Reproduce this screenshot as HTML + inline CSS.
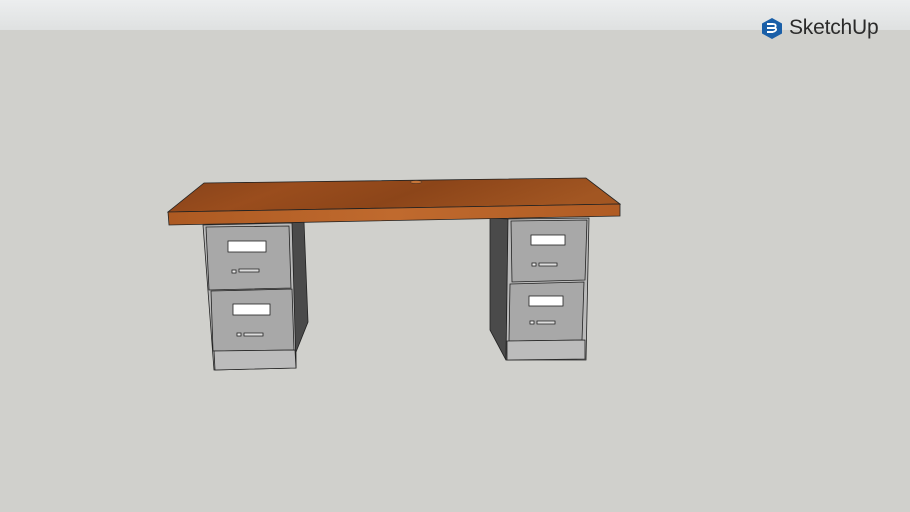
<!DOCTYPE html>
<html><head><style>
html,body{margin:0;padding:0;width:910px;height:512px;overflow:hidden;background:#d0d0cc;font-family:"Liberation Sans",sans-serif}
.top{position:absolute;left:0;top:0;width:910px;height:30px;background:linear-gradient(#eceeef,#dfe1e1)}
.logo{position:absolute;left:761px;top:16px;display:flex;align-items:center}
.logo span{font-size:21px;color:#2b2b2b;margin-left:6px;letter-spacing:-0.2px}
</style></head><body>
<div class="top"></div>
<div class="logo">
<svg width="22" height="23" viewBox="0 0 22 23"><path d="M11 1 L21 6.5 V16.5 L11 22 L1 16.5 V6.5Z" fill="#1a5fa8"/><path d="M6 7 H12 M6 11 H14 M6 15 H12" stroke="#fff" stroke-width="2" fill="none"/><path d="M12 7 Q16 7 14 11 M14 11 Q17 13 12 15" stroke="#fff" stroke-width="1.8" fill="none"/></svg>
<span>SketchUp</span>
</div>
<svg width="910" height="512" style="position:absolute;left:0;top:0">
<defs>
<linearGradient id="wood" x1="0" y1="0" x2="1" y2="0.2">
<stop offset="0" stop-color="#86421a"/><stop offset="0.3" stop-color="#9a4d1d"/><stop offset="0.6" stop-color="#8c4519"/><stop offset="1" stop-color="#a25622"/>
</linearGradient>
<linearGradient id="edge" x1="0" y1="0" x2="1" y2="0">
<stop offset="0" stop-color="#ad5a22"/><stop offset="0.5" stop-color="#c06a2e"/><stop offset="1" stop-color="#b05c24"/>
</linearGradient>
</defs>
<g stroke="#222" stroke-width="0.8">
<polygon points="288,223 304,222 308,322 296,352 296,368 292,368" fill="#4a4a4a"/>
<polygon points="203,225 292,223 296,368 214,370" fill="#b9b9b9"/>
<polygon points="206,227 289,226 291,288 209,290" fill="#a8a8a8"/>
<polygon points="211,291 292,289 294,350 213,351" fill="#a8a8a8"/>
<polygon points="214,351 295,350 296,368 215,370" fill="#bcbcbc"/>
<rect x="228" y="241" width="38" height="11" fill="#fff"/>
<rect x="233" y="304" width="37" height="11" fill="#fff"/>
<path d="M239 269 h20 v3 h-20z M244 333 h19 v3 h-19z" fill="#ddd"/>
<rect x="232" y="270" width="4" height="3" fill="#eee"/>
<rect x="237" y="333" width="4" height="3" fill="#eee"/>
<polygon points="490,218 508,219 506,360 490,330" fill="#4a4a4a"/>
<polygon points="508,219 589,218 586,360 506,360" fill="#b9b9b9"/>
<polygon points="511,221 587,220 585,280 512,282" fill="#a8a8a8"/>
<polygon points="510,284 584,282 582,340 509,341" fill="#a8a8a8"/>
<polygon points="507,341 585,340 585,359 507,360" fill="#bcbcbc"/>
<rect x="531" y="235" width="34" height="10" fill="#fff"/>
<rect x="529" y="296" width="34" height="10" fill="#fff"/>
<path d="M539 263 h18 v3 h-18z M537 321 h18 v3 h-18z" fill="#ddd"/>
<rect x="532" y="263" width="4" height="3" fill="#eee"/>
<rect x="530" y="321" width="4" height="3" fill="#eee"/>
<polygon points="204,183 586,178 620,204 168,212" fill="url(#wood)"/>
<polygon points="168,212 620,204 620,216 169,225" fill="url(#edge)"/>
<ellipse cx="416" cy="182" rx="6" ry="1.5" fill="#c77538" stroke-width="0.4"/>
</g>
</svg>
</body></html>
